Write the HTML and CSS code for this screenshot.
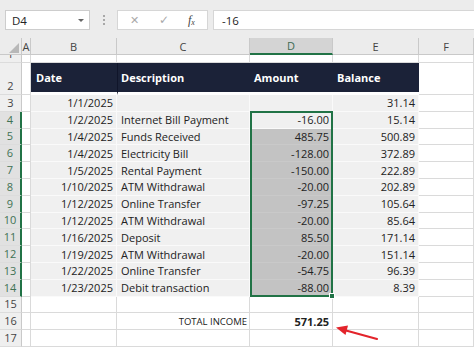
FILE: index.html
```html
<!DOCTYPE html>
<html>
<head>
<meta charset="utf-8">
<link rel="stylesheet" href="styles.css">
</head>
<body>
<div class="app">
  <div class="top">
    <div class="namebox"><span>D4</span><span class="caret"></span></div>
    <div class="dots"><i></i><i></i><i></i></div>
    <div class="icons">
      <span class="ic x">✕</span>
      <span class="ic ok">✓</span>
      <span class="ic fx">f<sub>x</sub></span>
    </div>
    <div class="formula">-16</div>
  </div>
  <div class="sheet">
    <div class="ch corner"><svg width="22" height="17" viewBox="0 0 22 17"><polygon points="9,15 19,15 19,5" fill="#b8b8b8"/></svg></div>
    <div class="ch">A</div>
    <div class="ch">B</div>
    <div class="ch">C</div>
    <div class="ch sel">D</div>
    <div class="ch">E</div>
    <div class="ch">F</div>

    <div class="rh">1</div><div class="c"></div><div class="c"></div><div class="c"></div><div class="c"></div><div class="c"></div><div class="c"></div>

    <div class="rh">2</div><div class="c"></div><div class="h hd">Date</div><div class="h hc">Description</div><div class="h">Amount</div><div class="h">Balance</div><div class="c"></div>

    <div class="rh">3</div><div class="c"></div><div class="c d r">1/1/2025</div><div class="c d"></div><div class="c d"></div><div class="c d r">31.14</div><div class="c"></div>
    <div class="rh sel">4</div><div class="c"></div><div class="c d r">1/2/2025</div><div class="c d">Internet Bill Payment</div><div class="c d r">-16.00</div><div class="c d r">15.14</div><div class="c"></div>
    <div class="rh sel">5</div><div class="c"></div><div class="c d r">1/4/2025</div><div class="c d">Funds Received</div><div class="c d r s">485.75</div><div class="c d r">500.89</div><div class="c"></div>
    <div class="rh sel">6</div><div class="c"></div><div class="c d r">1/4/2025</div><div class="c d">Electricity Bill</div><div class="c d r s">-128.00</div><div class="c d r">372.89</div><div class="c"></div>
    <div class="rh sel">7</div><div class="c"></div><div class="c d r">1/5/2025</div><div class="c d">Rental Payment</div><div class="c d r s">-150.00</div><div class="c d r">222.89</div><div class="c"></div>
    <div class="rh sel">8</div><div class="c"></div><div class="c d r">1/10/2025</div><div class="c d">ATM Withdrawal</div><div class="c d r s">-20.00</div><div class="c d r">202.89</div><div class="c"></div>
    <div class="rh sel">9</div><div class="c"></div><div class="c d r">1/12/2025</div><div class="c d">Online Transfer</div><div class="c d r s">-97.25</div><div class="c d r">105.64</div><div class="c"></div>
    <div class="rh sel">10</div><div class="c"></div><div class="c d r">1/12/2025</div><div class="c d">ATM Withdrawal</div><div class="c d r s">-20.00</div><div class="c d r">85.64</div><div class="c"></div>
    <div class="rh sel">11</div><div class="c"></div><div class="c d r">1/16/2025</div><div class="c d">Deposit</div><div class="c d r s">85.50</div><div class="c d r">171.14</div><div class="c"></div>
    <div class="rh sel">12</div><div class="c"></div><div class="c d r">1/19/2025</div><div class="c d">ATM Withdrawal</div><div class="c d r s">-20.00</div><div class="c d r">151.14</div><div class="c"></div>
    <div class="rh sel">13</div><div class="c"></div><div class="c d r">1/22/2025</div><div class="c d">Online Transfer</div><div class="c d r s">-54.75</div><div class="c d r">96.39</div><div class="c"></div>
    <div class="rh sel">14</div><div class="c"></div><div class="c d r">1/23/2025</div><div class="c d">Debit transaction</div><div class="c d r s">-88.00</div><div class="c d r">8.39</div><div class="c"></div>

    <div class="rh">15</div><div class="c"></div><div class="c"></div><div class="c"></div><div class="c"></div><div class="c"></div><div class="c"></div>
    <div class="rh">16</div><div class="c"></div><div class="c"></div><div class="c r small">TOTAL INCOME</div><div class="c r b">571.25</div><div class="c"></div><div class="c"></div>
    <div class="rh">17</div><div class="c"></div><div class="c"></div><div class="c"></div><div class="c"></div><div class="c"></div><div class="c"></div>

    <div class="selection"><span class="handle"></span></div>
  </div>
  <svg class="arrow" width="474" height="348" viewBox="0 0 474 348">
    <line x1="377" y1="339" x2="346" y2="330.5" stroke="#e3242b" stroke-width="2.2" stroke-linecap="round"/>
    <polygon points="336,327.5 348,325.5 345.5,335" fill="#e3242b"/>
  </svg>
</div>
</body>
</html>
```

FILE: styles.css
```css
* { box-sizing: border-box; }
html, body { margin: 0; padding: 0; }
body {
  width: 474px;
  height: 348px;
  overflow: hidden;
  background: #ffffff;
  font-family: "Open Sans", "Liberation Sans", sans-serif;
  color: #222;
}
.app { position: relative; width: 474px; height: 348px; }

.top {
  height: 38px;
  background: #ececec;
  display: flex;
  align-items: flex-start;
  padding: 10px 0 0 5px;
}
.namebox {
  width: 85px;
  height: 20px;
  background: #fff;
  border: 1px solid #cdcdcd;
  display: flex;
  align-items: center;
  justify-content: space-between;
  padding: 0 5px 0 6px;
  font-size: 11.5px;
  color: #222;
}
.caret {
  width: 0; height: 0;
  border-left: 3px solid transparent;
  border-right: 3px solid transparent;
  border-top: 3px solid #666;
}
.dots {
  width: 27px;
  height: 20px;
  display: flex;
  flex-direction: column;
  align-items: center;
  justify-content: center;
  gap: 2px;
}
.dots i { width: 2px; height: 2px; background: #a8a8a8; display: block; }
.icons {
  width: 91px;
  height: 20px;
  background: #fff;
  border: 1px solid #d6d6d6;
  display: flex;
  align-items: center;
  padding-left: 12px;
}
.ic { color: #a9a9a9; font-size: 12px; font-family: "DejaVu Sans", sans-serif; }
.x { width: 29px; font-size: 11px; }
.ok { width: 29px; }
.fx { color: #444; font-family: "Liberation Serif", serif; font-style: italic; font-size: 12px; }
.fx sub { font-size: 8px; vertical-align: -1px; }
.formula {
  margin-left: 5px;
  flex: 1;
  height: 20px;
  background: #fff;
  border: 1px solid #d6d6d6;
  border-right: 0;
  display: flex;
  align-items: center;
  padding-left: 8px;
  font-size: 11.5px;
}

.sheet {
  display: grid;
  grid-template-columns: 22px 9px 86px 133px 83px 86px 55px;
  grid-template-rows: 17px 8px 32px repeat(15, 16.8px);
  font-size: 11px;
  position: relative;
}
.ch {
  background: #ececec;
  color: #444;
  display: flex;
  align-items: center;
  justify-content: center;
  border-right: 1px solid #c9c9c9;
  border-bottom: 1px solid #c9c9c9;
  font-size: 11px;
}
.corner { display: block; padding: 0; }
.corner svg { display: block; }
.ch.sel {
  background: #d4d4d4;
  color: #3f6b52;
  border-bottom: 2px solid #217346;
}
.rh {
  background: #efefef;
  color: #444;
  display: flex;
  align-items: flex-end;
  justify-content: center;
  padding-bottom: 1px;
  border-right: 1px solid #c9c9c9;
  border-bottom: 1px solid #dcdcdc;
  font-size: 11px;
  line-height: 14px;
  overflow: hidden;
}
.rh.sel {
  background: #e1e1e1;
  color: #3f7254;
  border-right: 2px solid #217346;
}
.c {
  background: #fff;
  border-right: 1px solid #dadada;
  border-bottom: 1px solid #dadada;
  display: flex;
  align-items: center;
  padding: 0 3px 0 4px;
  white-space: nowrap;
  overflow: hidden;
}
.c.d {
  background: #f0f0f0;
  border-right-color: #fafafa;
  border-bottom-color: #fafafa;
}
.c.s {
  background: #c3c3c3;
  border-right-color: #c3c3c3;
  border-bottom-color: #c9c9c9;
}
.r { justify-content: flex-end; }
.small { font-size: 9.5px; padding-right: 2px; }
.b { font-weight: 700; padding-right: 3px; }
.h {
  background: #1b2238;
  color: #fff;
  font-weight: 700;
  display: flex;
  align-items: center;
  padding-left: 4px;
  border-bottom: 3px solid #fff;
  font-size: 11px;
}
.hd { padding-left: 5px; }
.hc { border-left: 1px solid #10152a; padding-left: 3px; }

.selection {
  position: absolute;
  grid-column: 5 / 6;
  grid-row: 5 / 16;
  top: -1px;
  left: 0;
  right: 0;
  bottom: 0;
  border: 2px solid #217346;
  pointer-events: none;
  z-index: 2;
}
.handle {
  position: absolute;
  right: -4px;
  bottom: -4px;
  width: 6px;
  height: 6px;
  background: #217346;
  border: 1px solid #fff;
}
.arrow { position: absolute; left: 0; top: 0; pointer-events: none; z-index: 3; }
```
